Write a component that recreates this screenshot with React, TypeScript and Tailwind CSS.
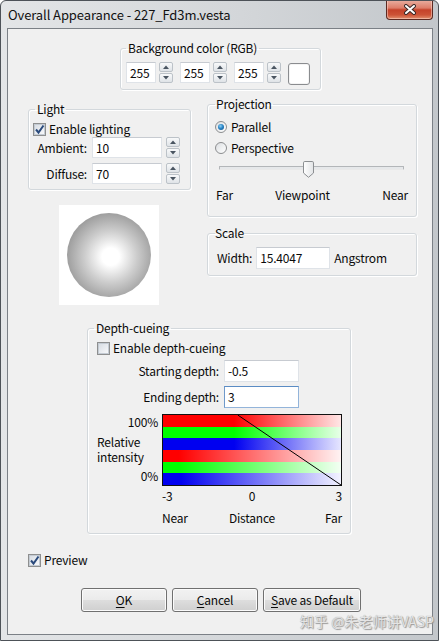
import React from "react";

const Spinner = () => (
  <div className="flex h-[21px] w-[14px] flex-col gap-px">
    <div className="flex flex-1 items-center justify-center rounded-[2px] border border-[#bcc2c8] bg-[linear-gradient(#f8f9fa,#dfe3e7)]">
      <svg width="6" height="4" viewBox="0 0 6 4">
        <path d="M0 4 L3 0.5 L6 4 Z" fill="#4a5561" />
      </svg>
    </div>
    <div className="flex flex-1 items-center justify-center rounded-[2px] border border-[#bcc2c8] bg-[linear-gradient(#f8f9fa,#dfe3e7)]">
      <svg width="6" height="4" viewBox="0 0 6 4">
        <path d="M0 0 L3 3.5 L6 0 Z" fill="#4a5561" />
      </svg>
    </div>
  </div>
);

const Field = ({
  w,
  h = "h-[21px]",
  value,
  focused = false,
}: {
  w: string;
  h?: string;
  value: string;
  focused?: boolean;
}) => (
  <div
    className={`${w} ${h} flex items-center bg-white pl-[3px] ${
      focused
        ? "border border-[#93b4da] border-t-[#5b8cc4] border-l-[#6f99ca]"
        : "border border-[#dfe3e8] border-t-[#c7cbd1]"
    }`}
  >
    {value}
  </div>
);

const CheckBox = ({ checked }: { checked: boolean }) => (
  <div className="flex h-[13px] w-[13px] shrink-0 items-center justify-center border border-[#8e8f8f] bg-white">
    <div className="relative h-[11px] w-[11px] border border-[#c4cbd3] bg-[linear-gradient(135deg,#d9dee4,#f7f8fa)]">
      {checked && (
        <svg
          className="absolute -left-px -top-px"
          width="11"
          height="11"
          viewBox="0 0 11 11"
        >
          <path
            d="M2 5.5 L4.5 8.5 L9.5 1.5"
            fill="none"
            stroke="#2a4a7c"
            strokeWidth="2"
          />
        </svg>
      )}
    </div>
  </div>
);

const Radio = ({ checked }: { checked: boolean }) => (
  <div className="flex h-[12px] w-[12px] shrink-0 items-center justify-center rounded-full border border-[#8b8d8f] bg-[linear-gradient(135deg,#dcdfe2,#ffffff)]">
    {checked && (
      <div className="h-[6px] w-[6px] rounded-full bg-[radial-gradient(circle_at_40%_35%,#8fd0f5_0%,#2a86c6_45%,#0d4a86_100%)]" />
    )}
  </div>
);

const Btn = ({ first, rest, w }: { first: string; rest: string; w: string }) => (
  <div
    className={`${w} flex h-[24px] items-center justify-center rounded-[3px] border border-[#707070] bg-[linear-gradient(#f2f2f2_0%,#ebebeb_48%,#dddddd_52%,#cfcfcf_100%)] shadow-[inset_0_0_0_1px_#fbfbfb]`}
  >
    <span>
      <span className="underline underline-offset-[2px]">{first}</span>
      {rest}
    </span>
  </div>
);

const groupCls =
  "rounded-[3px] border border-[#d3d8dc] shadow-[inset_1px_1px_0_#ffffff,1px_1px_0_#ffffff]";

export default function App() {
  return (
    <div className="relative h-[641px] w-[439px] overflow-hidden rounded-t-[6px] border border-[#4d5258] bg-[linear-gradient(to_right,#e3e5e7,#d3d6d9_55%,#c3c7cb)] font-['Noto_Sans_CJK_JP',sans-serif] text-[12px] leading-[16px] tracking-[-0.2px] text-[#0a0a0a]">
      {/* Title bar */}
      <div className="flex h-[27px] items-center pl-[7px] text-[13px] tracking-[-0.1px] text-[#111]">
        Overall Appearance - 227_Fd3m.vesta
      </div>

      {/* Close button */}
      <div className="absolute -top-px left-[385px] flex h-[20px] w-[47px] items-center justify-center rounded-b-[4px] border border-t-0 border-[#5c2a22] bg-[linear-gradient(#eab0a2_0%,#dd7d69_42%,#c5422a_52%,#cc5236_78%,#e2906f_100%)] shadow-[inset_0_0_0_1px_rgba(255,220,210,0.5)]">
        <svg width="14" height="11" viewBox="0 0 14 11">
          <path
            d="M3 2 L11 9 M11 2 L3 9"
            stroke="#3b2a28"
            strokeWidth="4"
            strokeLinecap="round"
          />
          <path
            d="M3 2 L11 9 M11 2 L3 9"
            stroke="#ffffff"
            strokeWidth="2"
            strokeLinecap="round"
          />
        </svg>
      </div>

      {/* Client area */}
      <div className="ml-[6px] flex h-[607px] w-[426px] flex-col border border-[#7b8086] bg-[#f0f0f0]">
        {/* Background color */}
        <fieldset
          className={`${groupCls} ml-[112px] mt-[11px] w-[201px] pb-[4px] pl-[5px] pt-[6px]`}
        >
          <legend className="px-[2px] leading-[16px]">Background color (RGB)</legend>
          <div className="flex items-start">
            <Field w="w-[30px]" value="255" />
            <div className="ml-[3px]">
              <Spinner />
            </div>
            <div className="ml-[7px]">
              <Field w="w-[30px]" value="255" />
            </div>
            <div className="ml-[3px]">
              <Spinner />
            </div>
            <div className="ml-[7px]">
              <Field w="w-[30px]" value="255" />
            </div>
            <div className="ml-[3px]">
              <Spinner />
            </div>
            <div className="ml-[7px] mt-px h-[22px] w-[22px] rounded-[3px] border border-[#8a8c8f] bg-white shadow-[inset_0_0_0_1px_#f4f4f4]" />
          </div>
        </fieldset>

        {/* Middle row */}
        <div className="mt-[6px] flex items-start">
          {/* Left column */}
          <div className="ml-[20px] flex w-[163px] flex-col">
            <fieldset
              className={`${groupCls} mt-[5px] w-[163px] pb-[5px] pl-[4px] pt-[4px]`}
            >
              <legend className="ml-[2px] px-[2px] leading-[16px]">Light</legend>
              <div className="flex h-[16px] items-center">
                <CheckBox checked />
                <span className="ml-[3px]">Enable lighting</span>
              </div>
              <div className="flex h-[21px] items-center">
                <span className="w-[54px] text-right">Ambient:</span>
                <div className="ml-[5px]">
                  <Field w="w-[70px]" value="10" />
                </div>
                <div className="ml-[4px]">
                  <Spinner />
                </div>
              </div>
              <div className="mt-[5px] flex h-[21px] items-center">
                <span className="w-[54px] text-right">Diffuse:</span>
                <div className="ml-[5px]">
                  <Field w="w-[70px]" value="70" />
                </div>
                <div className="ml-[4px]">
                  <Spinner />
                </div>
              </div>
            </fieldset>
            <div className="ml-[31px] mt-[15px] flex h-[100px] w-[100px] items-center justify-center bg-white">
              <div className="h-[84px] w-[84px] rounded-full bg-[radial-gradient(circle_at_52%_52%,#ffffff_0%,#ffffff_14%,#cdcdcd_42%,#9c9c9c_72%,#757575_94%,#6c6c6c_100%)]" />
            </div>
          </div>

          {/* Right column */}
          <div className="ml-[16px] flex w-[210px] flex-col">
            <fieldset
              className={`${groupCls} w-[210px] pb-[13px] pl-[7px] pr-[8px] pt-[5px]`}
            >
              <legend className="px-[1px] leading-[16px]">Projection</legend>
              <div className="flex h-[20px] items-center">
                <Radio checked />
                <span className="ml-[4px]">Parallel</span>
              </div>
              <div className="mt-px flex h-[20px] items-center">
                <Radio checked={false} />
                <span className="ml-[4px]">Perspective</span>
              </div>
              <div className="relative ml-[4px] mt-px h-[20px] w-[185px] pt-[7px]">
                <div className="h-[4px] w-[185px] rounded-[1px] border border-[#b3b6b9] border-b-[#e9e9e9] bg-[#e6e8ea]" />
                <svg
                  className="absolute left-[84px] top-[2px]"
                  width="11"
                  height="17"
                  viewBox="0 0 11 17"
                >
                  <defs>
                    <linearGradient id="thumb" x1="0" y1="0" x2="1" y2="0">
                      <stop offset="0" stopColor="#ffffff" />
                      <stop offset="1" stopColor="#e2e4e6" />
                    </linearGradient>
                  </defs>
                  <path
                    d="M0.5 1.8 Q0.5 0.5 1.8 0.5 H9.2 Q10.5 0.5 10.5 1.8 V12 L5.5 16.3 L0.5 12 Z"
                    fill="url(#thumb)"
                    stroke="#8c8f92"
                  />
                </svg>
              </div>
              <div className="mt-[8px] flex h-[16px] items-center justify-between pl-px">
                <span>Far</span>
                <span className="mr-[10px]">Viewpoint</span>
                <span>Near</span>
              </div>
            </fieldset>

            <fieldset
              className={`${groupCls} mt-[8px] w-[210px] pb-[6px] pl-[7px] pt-[6px]`}
            >
              <legend className="leading-[16px]">Scale</legend>
              <div className="flex h-[22px] items-center">
                <span className="ml-[2px]">Width:</span>
                <div className="ml-[4px]">
                  <Field w="w-[74px]" h="h-[22px]" value="15.4047" />
                </div>
                <span className="ml-[4px]">Angstrom</span>
              </div>
            </fieldset>
          </div>
        </div>

        {/* Depth-cueing */}
        <fieldset
          className={`${groupCls} ml-[79px] mt-[15px] w-[264px] pb-[7px] pl-[9px] pt-[4px]`}
        >
          <legend className="-ml-[3px] px-[2px] leading-[16px]">Depth-cueing</legend>
          <div className="flex h-[16px] items-center">
            <CheckBox checked={false} />
            <span className="ml-[3px]">Enable depth-cueing</span>
          </div>
          <div className="mt-[4px] flex h-[22px] items-center">
            <span className="w-[122px] text-right">Starting depth:</span>
            <div className="ml-[5px]">
              <Field w="w-[75px]" h="h-[22px]" value="-0.5" />
            </div>
          </div>
          <div className="mt-[4px] flex h-[22px] items-center">
            <span className="w-[122px] text-right">Ending depth:</span>
            <div className="ml-[5px]">
              <Field w="w-[75px]" h="h-[22px]" value="3" focused />
            </div>
          </div>
          <div className="mt-[6px] flex items-start">
            <div className="flex w-[61px] flex-col">
              <span className="text-right leading-[16px]">100%</span>
              <span className="mt-[4px] leading-[15px]">
                Relative
                <br />
                intensity
              </span>
              <span className="mt-[4px] text-right leading-[16px]">0%</span>
            </div>
            <div className="relative ml-[4px] flex h-[72px] w-[180px] flex-col border border-[#111]">
              <div className="flex-1 bg-[linear-gradient(to_right,#ff0000_0%,#ff0000_40%,#ffe6e6_100%)]" />
              <div className="flex-1 bg-[linear-gradient(to_right,#00ff00_0%,#00ff00_40%,#e8ffe8_100%)]" />
              <div className="flex-1 bg-[linear-gradient(to_right,#0000f0_0%,#0000f0_40%,#e6e6ff_100%)]" />
              <div className="flex-1 bg-[linear-gradient(to_right,#ff0000_0%,#ff0000_9%,#fff3f3_100%)]" />
              <div className="flex-1 bg-[linear-gradient(to_right,#00ff00_0%,#00ff00_9%,#f3fff3_100%)]" />
              <div className="flex-1 bg-[linear-gradient(to_right,#0000f0_0%,#0000f0_10%,#f3f3ff_100%)]" />
              <svg
                className="absolute inset-0 h-full w-full"
                viewBox="0 0 100 100"
                preserveAspectRatio="none"
              >
                <line
                  x1="42"
                  y1="0"
                  x2="100"
                  y2="100"
                  stroke="#000"
                  strokeWidth="1"
                  vectorEffect="non-scaling-stroke"
                />
              </svg>
            </div>
          </div>
          <div className="ml-[65px] mt-[2px] grid h-[16px] w-[180px] grid-cols-3 items-center">
            <span className="text-left">-3</span>
            <span className="text-center">0</span>
            <span className="text-right">3</span>
          </div>
          <div className="ml-[65px] mt-[6px] grid h-[16px] w-[180px] grid-cols-3 items-center">
            <span className="text-left">Near</span>
            <span className="text-center">Distance</span>
            <span className="text-right">Far</span>
          </div>
        </fieldset>

        {/* Preview */}
        <div className="ml-[20px] mt-[18px] flex h-[16px] items-center">
          <CheckBox checked />
          <span className="ml-[3px]">Preview</span>
        </div>

        {/* Buttons */}
        <div className="ml-[73px] mt-[20px] flex gap-[5px]">
          <Btn first="O" rest="K" w="w-[86px]" />
          <Btn first="C" rest="ancel" w="w-[86px]" />
          <Btn first="S" rest="ave as Default" w="w-[98px]" />
        </div>
      </div>

      {/* Watermark */}
      <div className="absolute left-[299px] top-[611px] font-['Noto_Sans_CJK_SC',sans-serif] text-[14px] leading-[18px] tracking-normal text-[#e4e4e4] [text-shadow:0_0_1px_#8a8a8a,1px_1px_1px_#9a9a9a]">
        知乎 @朱老师讲VASP
      </div>
    </div>
  );
}
